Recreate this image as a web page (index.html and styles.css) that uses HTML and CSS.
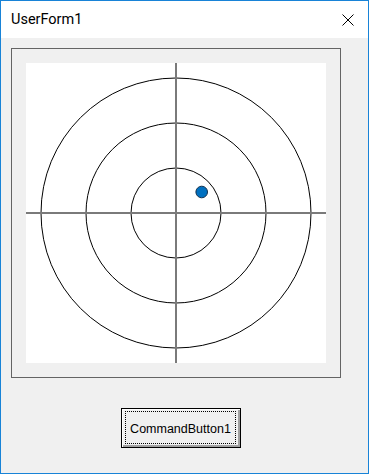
FILE: index.html
```html
<!DOCTYPE html>
<html lang="en">
<head>
    <meta charset="UTF-8">
    <title>UserForm1</title>
    <link rel="stylesheet" href="styles.css">
</head>
<body>
    <div class="window">
        <div class="title-bar">
            <span class="title">UserForm1</span>
            <svg class="close" width="12" height="12" viewBox="0 0 12 12">
                <path d="M0.5 0.5 L11.5 11.5 M11.5 0.5 L0.5 11.5" stroke="#000" stroke-width="1" fill="none"/>
            </svg>
        </div>
        <div class="client">
            <div class="frame">
                <svg class="canvas" width="300" height="300" viewBox="0 0 300 300">
                    <circle cx="150" cy="150" r="45" fill="none" stroke="#000" stroke-width="1"/>
                    <circle cx="150" cy="150" r="90" fill="none" stroke="#000" stroke-width="1"/>
                    <circle cx="150" cy="150" r="135" fill="none" stroke="#000" stroke-width="1"/>
                    <line x1="150" y1="0" x2="150" y2="300" stroke="#7a7a7a" stroke-width="2"/>
                    <line x1="0" y1="150" x2="300" y2="150" stroke="#7a7a7a" stroke-width="2"/>
                    <circle cx="175.7" cy="129" r="5.8" fill="#0070c0" stroke="#10304f" stroke-width="1"/>
                </svg>
            </div>
            <div class="button-row">
                <button class="command-button"><span class="focus">CommandButton1</span></button>
            </div>
        </div>
    </div>
</body>
</html>
```

FILE: styles.css
```css
body {
    margin: 0;
    background-color: #f0f0f0;
}

.window {
    width: 369px;
    height: 474px;
    box-sizing: border-box;
    border: 1px solid #1883d7;
    background-color: #f0f0f0;
    display: flex;
    flex-direction: column;
}

.title-bar {
    height: 37px;
    background-color: #fff;
    display: flex;
    align-items: center;
    justify-content: space-between;
    padding: 0 14px 0 10px;
}

.title {
    font-family: Roboto, 'Liberation Sans', sans-serif;
    font-size: 14.5px;
    color: #000;
}

.close {
    display: block;
    margin-top: 1px;
}

.client {
    flex: 1;
    padding: 10px 0 0 10px;
}

.frame {
    width: 330px;
    height: 330px;
    box-sizing: border-box;
    border: 1px solid #646464;
    padding: 14px;
}

.canvas {
    display: block;
    background-color: #fff;
}

.button-row {
    margin-top: 30px;
    padding-left: 110px;
}

.command-button {
    width: 120px;
    height: 40px;
    box-sizing: border-box;
    border: 1px solid #000;
    padding: 0;
    background-color: #f0f0f0;
    box-shadow: inset 1px 1px #fff, inset -2px -2px #a0a0a0;
    display: flex;
    cursor: pointer;
}

.focus {
    flex: 1;
    margin: 2px 4px 3px 3px;
    border: 1px dotted #000;
    display: flex;
    align-items: center;
    justify-content: center;
    padding-top: 2px;
    font-family: 'Liberation Sans', Arial, sans-serif;
    font-size: 12.5px;
    color: #000;
}
```
